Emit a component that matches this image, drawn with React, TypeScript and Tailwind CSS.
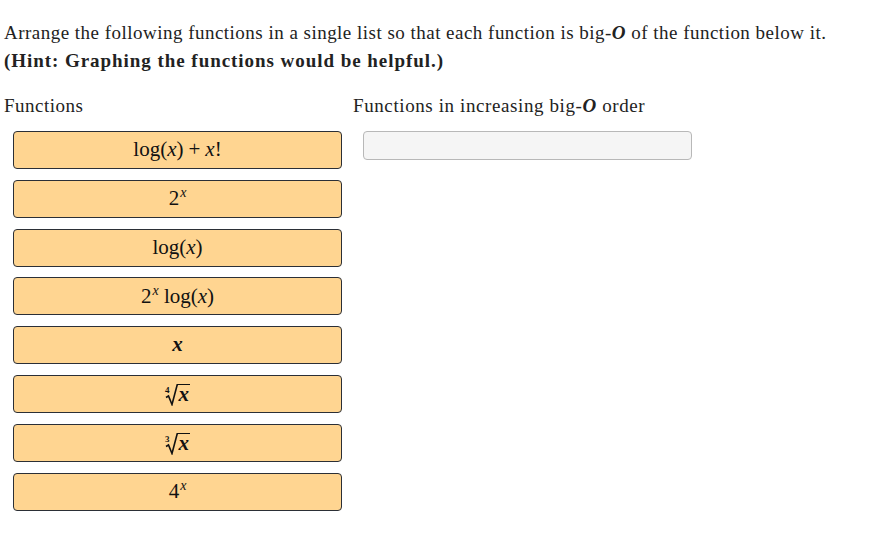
import React from "react";

const serif = { fontFamily: '"Liberation Serif", "Times New Roman", serif' } as React.CSSProperties;

function X() {
  return <span className="italic">x</span>;
}

function Sup({ children }: { children: React.ReactNode }) {
  return <span className="text-[14px] italic relative -top-[8px] ml-[1px]">{children}</span>;
}

function Root({ n }: { n: string }) {
  return (
    <span className="inline-flex items-start h-[22px] mt-[2px]">
      <span className="text-[9px] leading-none font-bold mt-[2px] -mr-[5px]">{n}</span>
      <svg width="13" height="22" viewBox="0 0 13 22" className="block">
        <path d="M1 13.5 L3.5 12 L7 20.5 L12.2 0.8 L13 0.8" fill="none" stroke="#111" strokeWidth="1.6" strokeLinejoin="miter" />
      </svg>
      <span className="border-t-[1.6px] border-[#111] italic font-bold text-[21px] leading-[19px] px-[1px]">x</span>
    </span>
  );
}

const items: React.ReactNode[] = [
  <span>log(<X />)<span className="mx-[5px]">+</span><X />!</span>,
  <span>2<Sup>x</Sup></span>,
  <span>log(<X />)</span>,
  <span>2<Sup>x</Sup> log(<X />)</span>,
  <span className="font-bold"><X /></span>,
  <Root n="4" />,
  <Root n="3" />,
  <span>4<Sup>x</Sup></span>,
];

export default function App() {
  return (
    <div className="w-[877px] h-[543px] bg-white text-[#222] pl-[4px] pt-[19px]" style={serif}>
      <p className="text-[19px] leading-[28px] tracking-[0.48px]">
        Arrange the following functions in a single list so that each function is big-<span className="italic font-bold">O</span> of the function below it.
      </p>
      <p className="text-[19px] leading-[28px] font-bold tracking-[0.95px]">(Hint: Graphing the functions would be helpful.)</p>
      <div className="flex mt-[19px]">
        <div className="w-[349px]">
          <div className="text-[19px] leading-[24px] h-[24px] tracking-[0.5px]">Functions</div>
          <div className="flex flex-col gap-[10.8px] mt-[13px] ml-[9px] w-[329px]">
            {items.map((it, i) => (
              <div
                key={i}
                className="h-[38px] bg-[#FFD591] border border-[#2b2f36] rounded-[4px] flex items-center justify-center text-[21px] text-[#111]"
              >
                {it}
              </div>
            ))}
          </div>
        </div>
        <div className="w-[349px]">
          <div className="text-[19px] leading-[24px] h-[24px] tracking-[0.6px]">
            Functions in increasing big-<span className="italic font-bold">O</span> order
          </div>
          <div className="mt-[13px] ml-[10px] w-[329px] h-[29px] bg-[#f5f5f5] border border-[#b8b8b8] rounded-[4px]" />
        </div>
      </div>
    </div>
  );
}
